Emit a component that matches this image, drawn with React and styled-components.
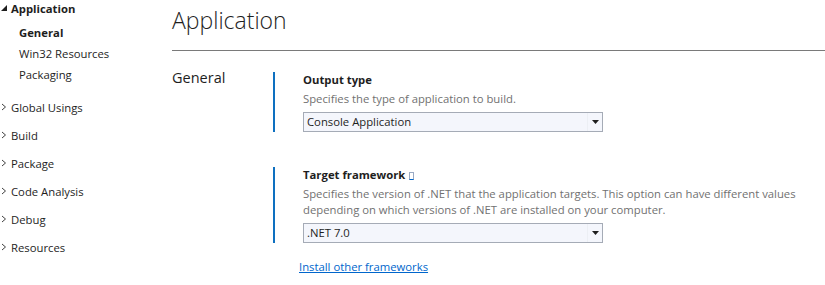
import React from 'react';
import styled, { createGlobalStyle } from 'styled-components';

const GlobalStyle = createGlobalStyle`
  html, body {
    margin: 0;
    padding: 0;
    background: #ffffff;
  }
  body {
    font-family: "Open Sans", "Noto Sans", sans-serif;
    color: #1e1e1e;
    font-size: 11.3px;
  }
  * {
    box-sizing: border-box;
  }
`;

const nav = [
  {
    label: 'Application',
    open: true,
    children: [
      { label: 'General', active: true },
      { label: 'Win32 Resources' },
      { label: 'Packaging' },
    ],
  },
  { label: 'Global Usings' },
  { label: 'Build' },
  { label: 'Package' },
  { label: 'Code Analysis' },
  { label: 'Debug' },
  { label: 'Resources' },
];

function Expander({ open }) {
  if (open) {
    return (
      <svg width="8" height="8" viewBox="0 0 8 8">
        <path d="M7 1 L7 7 L1 7 Z" fill="#1e1e1e" />
      </svg>
    );
  }
  return (
    <svg width="8" height="8" viewBox="0 0 8 8">
      <path d="M2 1 L5.5 4 L2 7" fill="none" stroke="#404040" strokeWidth="1" />
    </svg>
  );
}

function Dropdown({ value }) {
  return (
    <Select>
      <SelectValue>{value}</SelectValue>
      <SelectArrow>
        <svg width="7" height="4" viewBox="0 0 7 4">
          <path d="M0 0 L7 0 L3.5 4 Z" fill="#1e1e1e" />
        </svg>
      </SelectArrow>
    </Select>
  );
}

export default function App() {
  return (
    <>
      <GlobalStyle />
      <Page>
        <Sidebar>
          {nav.map((group) => (
            <Group key={group.label} open={group.open}>
              <GroupHeader open={group.open}>
                <Expander open={group.open} />
                <span>{group.label}</span>
              </GroupHeader>
              {group.children && (
                <Children>
                  {group.children.map((c) => (
                    <Child key={c.label} active={c.active}>{c.label}</Child>
                  ))}
                </Children>
              )}
            </Group>
          ))}
        </Sidebar>
        <Main>
          <Title>Application</Title>
          <Rule />
          <Section>
            <SectionName>General</SectionName>
            <Settings>
              <Setting>
                <SettingName>Output type</SettingName>
                <Description>Specifies the type of application to build.</Description>
                <Dropdown value="Console Application" />
              </Setting>
              <Setting>
                <SettingName>
                  Target framework <LinkBox />
                </SettingName>
                <Description>
                  Specifies the version of .NET that the application targets. This option can have different values
                  <br />
                  depending on which versions of .NET are installed on your computer.
                </Description>
                <Dropdown value=".NET 7.0" />
              </Setting>
              <Link href="#">Install other frameworks</Link>
            </Settings>
          </Section>
        </Main>
      </Page>
    </>
  );
}

const Page = styled.div`
  display: flex;
  width: 825px;
  height: 285px;
  overflow: hidden;
`;

const Sidebar = styled.nav`
  width: 171px;
  flex-shrink: 0;
  display: flex;
  flex-direction: column;
`;

const Group = styled.div`
  display: flex;
  flex-direction: column;
  margin-bottom: ${(p) => (p.open ? '8px' : '0')};
`;

const GroupHeader = styled.div`
  display: flex;
  align-items: center;
  gap: 3px;
  height: ${(p) => (p.open ? '16px' : '28px')};
  font-weight: ${(p) => (p.open ? 700 : 400)};
  color: #1e1e1e;
`;

const Children = styled.div`
  display: flex;
  flex-direction: column;
  padding-left: 19px;
  padding-top: 6px;
`;

const Child = styled.div`
  height: 21px;
  line-height: 21px;
  font-weight: ${(p) => (p.active ? 700 : 400)};
`;

const Main = styled.main`
  flex: 1;
  display: flex;
  flex-direction: column;
  padding-left: 1px;
`;

const Title = styled.h1`
  margin: 0;
  padding-top: 4px;
  font-size: 23px;
  font-weight: 300;
  line-height: 32px;
  color: #1e1e1e;
`;

const Rule = styled.div`
  height: 1px;
  background: #7a7a7a;
  margin-top: 14px;
`;

const Section = styled.section`
  display: flex;
  padding-top: 21px;
`;

const SectionName = styled.div`
  width: 101px;
  font-size: 14.5px;
  line-height: 16px;
  margin-top: -2px;
  color: #1e1e1e;
`;

const Settings = styled.div`
  display: flex;
  flex-direction: column;
  align-items: flex-start;
`;

const Setting = styled.div`
  display: flex;
  flex-direction: column;
  border-left: 2px solid #0e70c0;
  padding-left: 28px;
  margin-bottom: 35px;
  &:nth-child(2) {
    margin-bottom: 16px;
  }
`;

const SettingName = styled.div`
  font-weight: 700;
  line-height: 16px;
  display: flex;
  align-items: center;
  gap: 4px;
`;

const LinkBox = styled.span`
  display: inline-block;
  width: 5px;
  height: 8px;
  border: 1px solid #9aaac4;
  border-bottom: 1px solid #0066cc;
  margin-top: 2px;
`;

const Description = styled.div`
  color: #717171;
  line-height: 16px;
  margin-top: 3px;
  margin-bottom: 5px;
`;

const Select = styled.div`
  display: flex;
  align-items: center;
  width: 300px;
  height: 20px;
  border: 1px solid #a5abb6;
  background: #f4f6fc;
`;

const SelectValue = styled.div`
  flex: 1;
  padding-left: 3px;
  line-height: 18px;
  color: #1e1e1e;
`;

const SelectArrow = styled.div`
  width: 15px;
  height: 18px;
  display: flex;
  align-items: center;
  justify-content: center;
  border-left: 1px solid #eceff4;
`;

const Link = styled.a`
  color: #0066cc;
  text-decoration: underline;
  margin-left: 26px;
  line-height: 16px;
`;
